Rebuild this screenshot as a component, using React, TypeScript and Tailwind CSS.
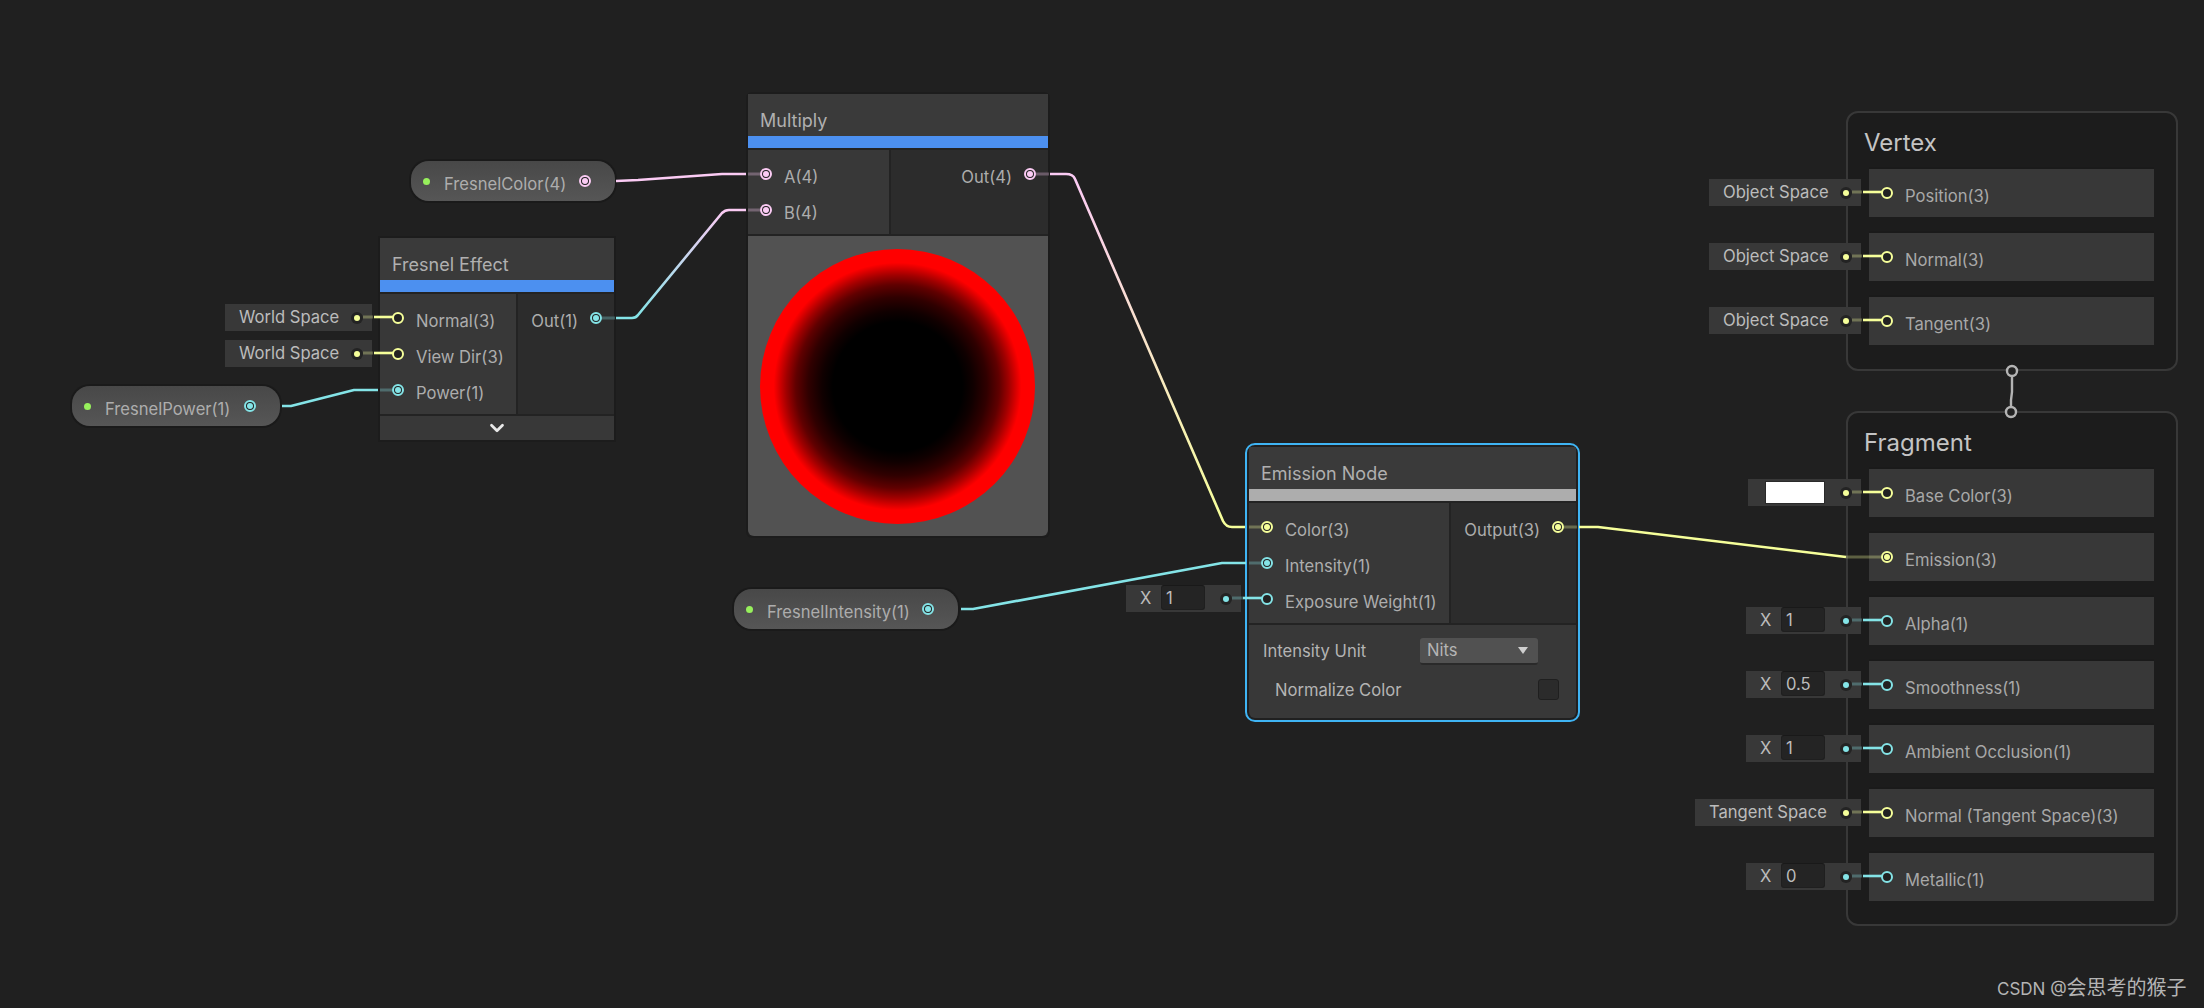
import React from 'react';
import { ChevronDown } from 'lucide-react';

type Tint = 'yellow' | 'cyan' | 'pink';

const ringClass: Record<Tint, string> = {
  yellow: 'border-[#f6ff9a]',
  cyan: 'border-[#84e4e7]',
  pink: 'border-[#fbcbf4]',
};
const dotClass: Record<Tint, string> = {
  yellow: 'bg-[#f6ff9a]',
  cyan: 'bg-[#84e4e7]',
  pink: 'bg-[#fbcbf4]',
};

// port ring, filled with a dot when a wire is plugged in
const Port = ({ tint, on }: { tint: Tint; on?: boolean }) => (
  <span className={`flex h-3 w-3 shrink-0 items-center justify-center rounded-full border-2 bg-[#222222] ${ringClass[tint]}`}>
    {on && <span className={`h-[6px] w-[6px] rounded-full ${dotClass[tint]}`} />}
  </span>
);

const InputBox = ({ tint, className, children }: { tint: Tint; className: string; children: React.ReactNode }) => (
  <div className={`absolute right-[calc(100%+8px)] flex h-[27px] items-center justify-end bg-[#383838] pr-[9px] text-[16.6px] leading-none text-[#bcbcbc] ${className}`}>
    {children}
    <span className="ml-auto flex h-3 w-3 shrink-0 items-center justify-center rounded-full bg-[#232323]">
      <span className={`h-[6px] w-[6px] rounded-full ${dotClass[tint]}`} />
    </span>
  </div>
);

const SpaceBox = ({ label, className }: { label: string; className: string }) => (
  <InputBox tint="yellow" className={className}>
    <span className="whitespace-nowrap pb-px pl-[14px]">{label}</span>
  </InputBox>
);

const FloatBox = ({ value, className }: { value: string; className: string }) => (
  <InputBox tint="cyan" className={className}>
    <span className="w-[35px] shrink-0 pl-[14px]">X</span>
    <span className="flex h-[25px] w-[44px] shrink-0 items-center self-start rounded-[3px] border border-[#1f1f1f] border-t-[#191919] bg-[#242424] pl-[4px] pt-[2px]">{value}</span>
  </InputBox>
);

const PortRow = ({ label, tint, on, children }: { label: string; tint: Tint; on?: boolean; children?: React.ReactNode }) => (
  <div className="relative flex h-9 items-center gap-3 pl-3">
    {children}
    <Port tint={tint} on={on} />
    <span className="whitespace-nowrap pt-[6px] text-[16.6px] leading-none text-[#adadad]">{label}</span>
  </div>
);

const OutRow = ({ label, tint }: { label: string; tint: Tint }) => (
  <div className="flex h-9 items-center justify-end gap-[12px] pr-3">
    <span className="whitespace-nowrap pt-[6px] text-[16.6px] leading-none text-[#adadad]">{label}</span>
    <Port tint={tint} on />
  </div>
);

const Title = ({ text, bar }: { text: string; bar: string }) => (
  <div className="flex flex-col">
    <div className="flex h-[42px] items-end bg-[#3a3a3a] pb-[6px] pl-3 text-[18px] leading-none text-[#b0b0b0]">{text}</div>
    <div className={`h-3 ${bar}`} />
  </div>
);

const Pill = ({ label, tint, className }: { label: string; tint: Tint; className: string }) => (
  <div className={`absolute flex h-10 items-center rounded-[18px] bg-gradient-to-b from-[#484848] to-[#565656] pl-3 shadow-[0_0_0_2px_#1a1a1a] ${className}`}>
    <span className="h-[7px] w-[7px] shrink-0 rounded-full bg-[#97f05c]" />
    <span className="ml-[14px] whitespace-nowrap pt-[6px] text-[16.6px] leading-none text-[#adadad]">{label}</span>
    <span className="-mt-px ml-auto mr-[24px]">
      <Port tint={tint} on />
    </span>
  </div>
);

const StackRow = ({ label, tint, on, children }: { label: string; tint: Tint; on?: boolean; children?: React.ReactNode }) => (
  <div className="relative flex h-12 items-center gap-3 bg-[#383838] pl-3 shadow-[0_-2px_0_#1a1a1a]">
    {children}
    <Port tint={tint} on={on} />
    <span className="whitespace-nowrap pt-[6px] text-[16.6px] leading-none text-[#a8a8a8]">{label}</span>
  </div>
);

// one wire end: dim run off the node edge, bright run up to the port
const stubs: { y: number; x1: number; x2: number; color: string; dim?: boolean }[] = [
  { y: 317, x1: 363, x2: 373, color: '#f6ff9a', dim: true },
  { y: 317, x1: 374, x2: 393, color: '#f6ff9a' },
  { y: 353, x1: 363, x2: 373, color: '#f6ff9a', dim: true },
  { y: 353, x1: 374, x2: 393, color: '#f6ff9a' },
  { y: 390, x1: 380, x2: 392, color: '#84e4e7', dim: true },
  { y: 318, x1: 602, x2: 615, color: '#84e4e7', dim: true },
  { y: 174, x1: 748, x2: 760, color: '#fbcbf4', dim: true },
  { y: 210, x1: 748, x2: 760, color: '#fbcbf4', dim: true },
  { y: 174, x1: 1036, x2: 1049, color: '#fbcbf4', dim: true },
  { y: 527, x1: 1249, x2: 1261, color: '#f6ff9a', dim: true },
  { y: 563, x1: 1249, x2: 1261, color: '#84e4e7', dim: true },
  { y: 598, x1: 1232, x2: 1243, color: '#84e4e7', dim: true },
  { y: 598, x1: 1243, x2: 1262, color: '#84e4e7' },
  { y: 527, x1: 1564, x2: 1577, color: '#f6ff9a', dim: true },
  ...[192, 256, 320, 492, 620, 684, 748, 812, 876].flatMap((y) => {
    const color = y === 620 || y === 684 || y === 748 || y === 876 ? '#84e4e7' : '#f6ff9a';
    return [
      { y, x1: 1852, x2: 1862, color, dim: true },
      { y, x1: 1863, x2: 1882, color },
    ];
  }),
  { y: 557, x1: 1846, x2: 1867, color: '#f6ff9a', dim: true },
  { y: 557, x1: 1867, x2: 1881, color: '#f6ff9a', dim: true },
];

const Wires = () => (
  <svg className="pointer-events-none absolute left-0 top-0 h-[1008px] w-[2204px]" viewBox="0 0 2204 1008" fill="none">
    <defs>
      <linearGradient id="cyanPink" gradientUnits="userSpaceOnUse" x1="637" y1="318" x2="724" y2="211">
        <stop offset="0" stopColor="#84e4e7" />
        <stop offset="1" stopColor="#fbcbf4" />
      </linearGradient>
      <linearGradient id="pinkYellow" gradientUnits="userSpaceOnUse" x1="1075" y1="179" x2="1223" y2="521">
        <stop offset="0" stopColor="#fbcbf4" />
        <stop offset="1" stopColor="#f6ff9a" />
      </linearGradient>
    </defs>
    <g strokeWidth="2.6" strokeLinejoin="round">
      <path d="M616 181 L638 180 L722 174 L746 174" stroke="#fbcbf4" />
      <path d="M616 318 L632 318 Q636 318 638 315 L722 213 Q725 210 729 210 L746 210" stroke="url(#cyanPink)" />
      <path d="M1050 174 L1066 174 Q1073 174 1075 179 L1223 521 Q1226 527 1232 527 L1245 527" stroke="url(#pinkYellow)" />
      <path d="M282 406 L291 406 L354 390 L378 390" stroke="#84e4e7" />
      <path d="M961 609 L973 609 L1222 563 L1246 563" stroke="#84e4e7" />
      <path d="M1579 527 L1598 527 L1846 557" stroke="#f6ff9a" />
    </g>
    {stubs.map((s, i) => (
      <line key={i} x1={s.x1} x2={s.x2} y1={s.y} y2={s.y} stroke={s.color} strokeWidth={s.dim ? 3 : 2.6} strokeOpacity={s.dim ? 0.3 : 1} />
    ))}
    <g stroke="#b4b4b4" strokeWidth="2.4">
      <path d="M2012 376 L2012 392 L2011 400 L2011 407" />
      <circle cx="2012" cy="371" r="5" fill="#222222" />
      <circle cx="2011" cy="412" r="5" fill="#222222" />
    </g>
  </svg>
);

export default function App() {
  return (
    <div className="relative h-[1008px] w-[2204px] overflow-hidden bg-[#202020] font-['Inter',sans-serif]">
      <Pill label="FresnelColor(4)" tint="pink" className="left-[411px] top-[161px] w-[204px]" />
      <Pill label="FresnelPower(1)" tint="cyan" className="left-[72px] top-[386px] w-[208px]" />
      <Pill label="FresnelIntensity(1)" tint="cyan" className="left-[734px] top-[589px] w-[224px]" />

      {/* Fresnel Effect */}
      <div className="absolute left-[380px] top-[238px] flex w-[234px] flex-col gap-[2px] bg-[#232323] shadow-[0_0_0_2px_#1c1c1c]">
        <Title text="Fresnel Effect" bar="bg-[#4c90f0]" />
        <div className="flex gap-[2px]">
          <div className="w-[136px] bg-[#383838] py-[6px]">
            <PortRow label="Normal(3)" tint="yellow">
              <SpaceBox label="World Space" className="top-[4px] w-[147px]" />
            </PortRow>
            <PortRow label="View Dir(3)" tint="yellow">
              <SpaceBox label="World Space" className="top-[4px] w-[147px]" />
            </PortRow>
            <PortRow label="Power(1)" tint="cyan" on />
          </div>
          <div className="flex-1 bg-[#2c2c2c] py-[6px]">
            <OutRow label="Out(1)" tint="cyan" />
          </div>
        </div>
        <div className="flex h-6 items-center justify-center bg-[#383838]">
          <ChevronDown size={22} strokeWidth={3} className="text-[#e8e8e8]" />
        </div>
      </div>

      {/* Multiply */}
      <div className="absolute left-[748px] top-[94px] flex w-[300px] flex-col gap-[2px] rounded-[4px] bg-[#232323] shadow-[0_0_0_2px_#1c1c1c]">
        <Title text="Multiply" bar="bg-[#4c90f0]" />
        <div className="flex gap-[2px]">
          <div className="w-[141px] bg-[#383838] py-[6px]">
            <PortRow label="A(4)" tint="pink" on />
            <PortRow label="B(4)" tint="pink" on />
          </div>
          <div className="flex-1 bg-[#2c2c2c] py-[6px]">
            <OutRow label="Out(4)" tint="pink" />
          </div>
        </div>
        <div className="flex h-[300px] items-center justify-center rounded-b-[6px] bg-[#525252] pr-[2px]">
          <div className="h-[275px] w-[275px] rounded-full bg-[radial-gradient(circle_closest-side,#000_0%,#000_47%,#100000_55%,#300000_65%,#600000_74%,#a00000_81%,#e00000_87%,#f00_90%,#f00_100%)]" />
        </div>
      </div>

      {/* Emission Node, selected */}
      <div className="absolute left-[1245px] top-[443px] h-[279px] w-[335px] rounded-[10px] border-2 border-[#3fb4f4] p-[2px]">
        <div className="flex h-full flex-col gap-[2px] rounded-[6px] bg-[#232323]">
          <Title text="Emission Node" bar="bg-[#adadad]" />
          <div className="flex gap-[2px]">
            <div className="w-[200px] bg-[#383838] py-[6px]">
              <PortRow label="Color(3)" tint="yellow" on />
              <PortRow label="Intensity(1)" tint="cyan" on />
              <PortRow label="Exposure Weight(1)" tint="cyan">
                <FloatBox value="1" className="top-[4px] w-[115px]" />
              </PortRow>
            </div>
            <div className="flex-1 bg-[#2c2c2c] py-[6px]">
              <OutRow label="Output(3)" tint="yellow" />
            </div>
          </div>
          <div className="flex flex-1 flex-col rounded-b-[6px] bg-[#383838] pl-[14px] text-[16.6px] leading-none text-[#b4b4b4]">
            <div className="mt-[13px] flex h-[27px] items-center">
              <span className="w-[157px]">Intensity Unit</span>
              <div className="flex h-[27px] w-[118px] items-center justify-between rounded-[3px] border-b-2 border-[#2a2a2a] bg-[#515151] pl-[7px] pr-[10px]">
                <span>Nits</span>
                <span className="h-0 w-0 border-x-[5px] border-t-[7px] border-x-transparent border-t-[#cfcfcf]" />
              </div>
            </div>
            <div className="mt-[14px] flex h-[21px] items-center pl-[12px]">
              <span className="w-[263px] pt-[2px]">Normalize Color</span>
              <span className="h-[21px] w-[21px] rounded-[3px] border border-[#1f1f1f] bg-[#2b2b2b]" />
            </div>
          </div>
        </div>
      </div>

      {/* Master stack */}
      <div className="absolute left-[1846px] top-[111px] flex h-[260px] w-[332px] flex-col gap-4 rounded-[12px] border-2 border-[#383838] bg-[#1c1c1c] pl-[21px] pr-[22px] pt-[56px]">
        <div className="absolute left-[16px] top-[16px] text-[24px] leading-[28px] text-[#c4c4c4]">Vertex</div>
        <StackRow label="Position(3)" tint="yellow"><SpaceBox label="Object Space" className="top-[10px] w-[152px]" /></StackRow>
        <StackRow label="Normal(3)" tint="yellow"><SpaceBox label="Object Space" className="top-[10px] w-[152px]" /></StackRow>
        <StackRow label="Tangent(3)" tint="yellow"><SpaceBox label="Object Space" className="top-[10px] w-[152px]" /></StackRow>
      </div>

      <div className="absolute left-[1846px] top-[411px] flex h-[515px] w-[332px] flex-col gap-4 rounded-[12px] border-2 border-[#383838] bg-[#1c1c1c] pl-[21px] pr-[22px] pt-[56px]">
        <div className="absolute left-[16px] top-[16px] text-[24px] leading-[28px] text-[#c4c4c4]">Fragment</div>
        <StackRow label="Base Color(3)" tint="yellow">
          <InputBox tint="yellow" className="top-[10px] w-[113px]">
            <span className="ml-[17px] h-[23px] w-[60px] shrink-0 border border-[#2a2a2a] bg-white" />
          </InputBox>
        </StackRow>
        <StackRow label="Emission(3)" tint="yellow" on />
        <StackRow label="Alpha(1)" tint="cyan"><FloatBox value="1" className="top-[10px] w-[115px]" /></StackRow>
        <StackRow label="Smoothness(1)" tint="cyan"><FloatBox value="0.5" className="top-[10px] w-[115px]" /></StackRow>
        <StackRow label="Ambient Occlusion(1)" tint="cyan"><FloatBox value="1" className="top-[10px] w-[115px]" /></StackRow>
        <StackRow label="Normal (Tangent Space)(3)" tint="yellow"><SpaceBox label="Tangent Space" className="top-[10px] w-[166px]" /></StackRow>
        <StackRow label="Metallic(1)" tint="cyan"><FloatBox value="0" className="top-[10px] w-[115px]" /></StackRow>
      </div>

      <Wires />

      <div className="absolute left-[1997px] top-[974px] whitespace-nowrap text-[17px] leading-[28px] text-[#b4b4b4] font-['Inter','Noto_Sans_CJK_SC',sans-serif]">
        CSDN @<span className="text-[20px]">会思考的猴子</span>
      </div>
    </div>
  );
}
